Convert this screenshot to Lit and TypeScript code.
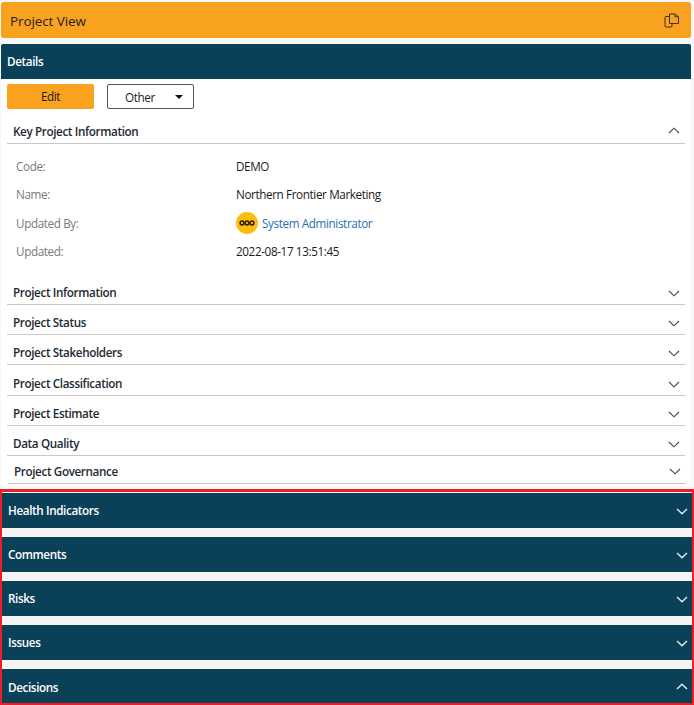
import { LitElement, html, css, svg } from "lit";
import { customElement } from "lit/decorators.js";

const chevron = (up: boolean, cls: string) => html`<svg class=${cls} width="12" height="7" viewBox="0 0 12 7" fill="none" stroke="currentColor" stroke-width="1.1">
  ${up ? svg`<path d="M1 6 L6 1.2 L11 6"/>` : svg`<path d="M1 1 L6 5.8 L11 1"/>`}
</svg>`;

const rows: [string, number][] = [
  ["Project Information", 30],
  ["Project Status", 30],
  ["Project Stakeholders", 30],
  ["Project Classification", 31],
  ["Project Estimate", 30],
  ["Data Quality", 30],
];
const bars: [string, boolean][] = [
  ["Health Indicators", false],
  ["Comments", false],
  ["Risks", false],
  ["Issues", false],
  ["Decisions", true],
];
const info: [string, string][] = [
  ["Code:", "DEMO"],
  ["Name:", "Northern Frontier Marketing"],
  ["Updated By:", ""],
  ["Updated:", "2022-08-17 13:51:45"],
];

@customElement("app-root")
export class AppRoot extends LitElement {
  static styles = css`
    :host {
      display: block;
      width: 694px;
      height: 705px;
      overflow: hidden;
      background: #f8f8f8;
      font-family: "Open Sans", "Noto Sans", sans-serif;
      font-size: 11.7px;
      line-height: 16px;
      color: #1b1b1b;
      letter-spacing: -0.38px;
    }
    .top { padding: 2px 3px 0 1px; }
    .title {
      height: 36px;
      background: #f8a21f;
      border-radius: 3px;
      display: flex;
      align-items: center;
      justify-content: space-between;
      padding: 1px 11px 0 9px;
      font-size: 13.5px;
      letter-spacing: -0.1px;
      color: #222;
      box-sizing: border-box;
    }
    .card {
      margin-top: 6px;
      background: #fff;
      border-radius: 2px 2px 3px 3px;
      padding-bottom: 2px;
    }
    .details-head {
      height: 35px;
      box-sizing: border-box;
      padding: 0 0 1px 6px;
      background: #0b4059;
      color: #fff;
      font-weight: 600;
      display: flex;
      align-items: center;
      border-radius: 2px 2px 0 0;
    }
    .actions {
      display: flex;
      gap: 13px;
      padding: 5px 0 0 6px;
      height: 25px;
    }
    .edit {
      width: 87px;
      height: 25px;
      box-sizing: border-box;
      padding-bottom: 1px;
      background: #f8a21f;
      border-radius: 2px;
      display: flex;
      align-items: center;
      justify-content: center;
    }
    .other {
      width: 87px;
      height: 25px;
      box-sizing: border-box;
      border: 1px solid #555;
      border-radius: 2px;
      display: flex;
      align-items: center;
      padding-left: 17px;
    }
    .caret {
      width: 0;
      height: 0;
      border-left: 4.5px solid transparent;
      border-right: 4.5px solid transparent;
      border-top: 4.5px solid #111;
      margin-left: 20px;
    }
    .panel { padding: 0 6px; }
    .row {
      display: flex;
      align-items: flex-end;
      justify-content: space-between;
      box-sizing: border-box;
      border-bottom: 1px solid #c9c9c9;
      padding: 0 5px 4px 6px;
      font-weight: 600;
      color: #1e2a32;
    }
    .row .chev { color: #3b4a58; margin-bottom: 3px; }
    .key { height: 35px; }
    .key .chev { margin-bottom: 5px; }
    .info {
      padding: 7.8px 0 0 9px;
      height: 131px;
      box-sizing: border-box;
    }
    .info-row {
      display: grid;
      grid-template-columns: 220px 1fr;
      height: 28.4px;
      align-items: center;
    }
    .label { color: #7a7a7a; }
    .user { display: flex; align-items: center; gap: 4px; color: #1f6fb2; }
    .avatar {
      width: 22px;
      height: 22px;
      border-radius: 50%;
      background: #fdbd10;
      display: flex;
      align-items: center;
      justify-content: center;
    }
    .gov {
      height: 28px;
      margin: 0 -1px 0 1px;
      padding-left: 6px;
    }
    .gov .chev { margin-bottom: 4px; }
    .red {
      margin-top: 3px;
      height: 216px;
      box-sizing: border-box;
      border: 2px solid #ee1c25;
      border-top-width: 3px;
      background: #f4f4f4;
      padding-top: 1px;
      display: flex;
      flex-direction: column;
      gap: 9px;
    }
    .bar {
      flex: none;
      height: 35px;
      box-sizing: border-box;
      padding: 0 4px 1px 6px;
      background: #0b4059;
      color: #fff;
      font-weight: 600;
      display: flex;
      align-items: center;
      justify-content: space-between;
    }
    .bar:last-child { height: 34px; padding-bottom: 0; padding-top: 1px; }
    .bar .chev { color: #dfeef5; stroke-width: 1.4; margin-top: 2px; }
    .bar:last-child .chev { margin-top: 0; }
  `;

  render() {
    return html`
      <div class="top">
        <div class="title">
          <span>Project View</span>
          <svg width="16" height="15" viewBox="0 0 16 15" fill="none" stroke="#3a3520" stroke-width="1">
            <path d="M5.5 3.5 H2 Q1 3.5 1 4.5 V13 Q1 14 2 14 H7 Q8 14 8 13 V11"/>
            <path d="M5.5 10.5 V1 H11 L14.5 3.8 V10.5 Z"/>
            <path d="M11 1 V3.8 H14.5"/>
          </svg>
        </div>
        <div class="card">
          <div class="details-head">Details</div>
          <div class="actions">
            <div class="edit">Edit</div>
            <div class="other">Other<span class="caret"></span></div>
          </div>
          <div class="panel">
            <div class="row key">Key Project Information ${chevron(true, "chev")}</div>
            <div class="info">
              ${info.map(
                ([l, v]) => html`<div class="info-row">
                  <span class="label">${l}</span>
                  ${v
                    ? html`<span>${v}</span>`
                    : html`<span class="user">
                        <span class="avatar">
                          <svg width="16" height="6" viewBox="0 0 16 6" fill="none" stroke="#2a2000" stroke-width="1.5">
                            <circle cx="3" cy="3" r="1.9"/><circle cx="8" cy="3" r="1.9"/><circle cx="13" cy="3" r="1.9"/>
                          </svg>
                        </span>
                        System Administrator
                      </span>`}
                </div>`
              )}
            </div>
            ${rows.map(
              ([t, h]) => html`<div class="row" style="height:${h}px">${t} ${chevron(false, "chev")}</div>`
            )}
            <div class="row gov">Project Governance ${chevron(false, "chev")}</div>
          </div>
        </div>
      </div>
      <div class="red">
        ${bars.map(([t, up]) => html`<div class="bar">${t} ${chevron(up, "chev")}</div>`)}
      </div>
    `;
  }
}
